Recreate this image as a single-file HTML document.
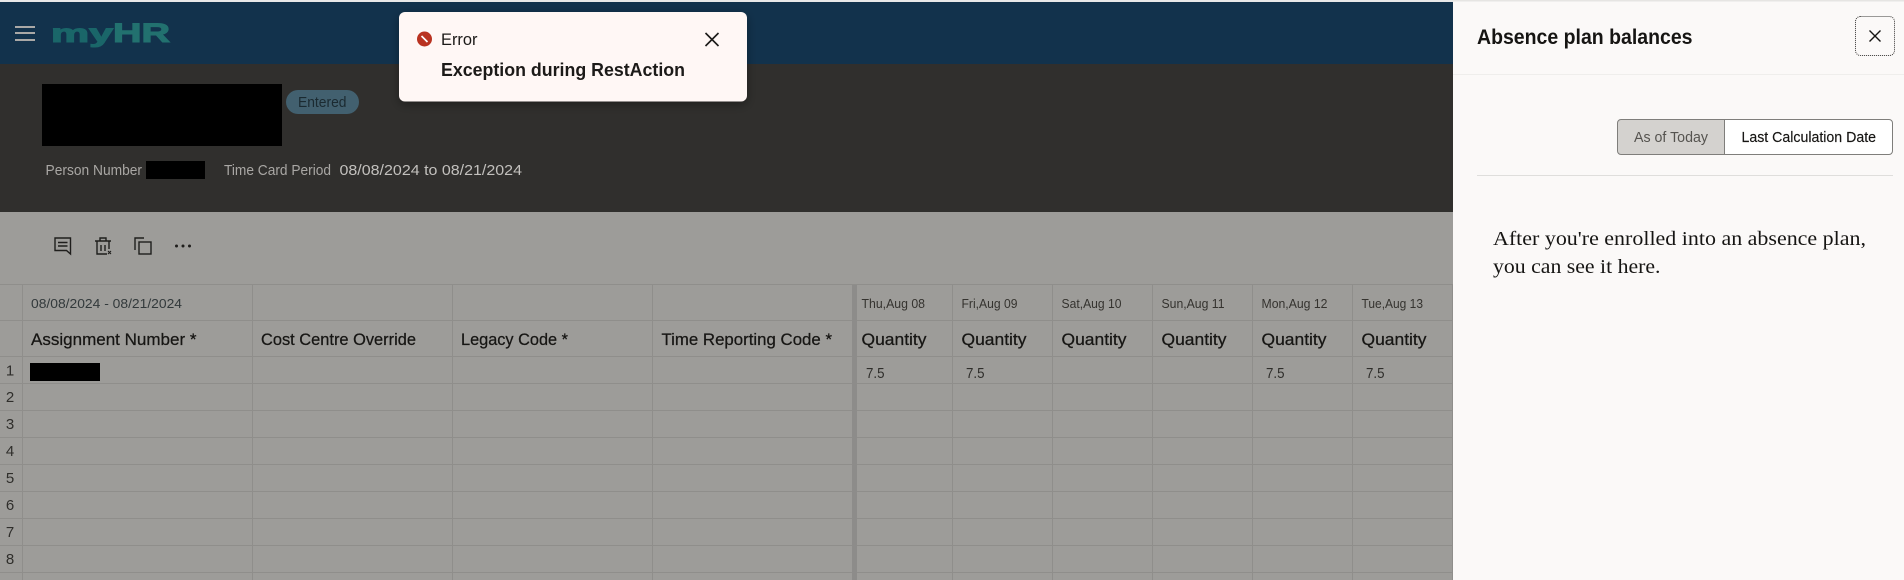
<!DOCTYPE html>
<html lang="en">
<head>
<meta charset="utf-8">
<title>myHR</title>
<style>
html,body{margin:0;padding:0;width:1904px;height:580px;overflow:hidden;background:#9d9c99}
svg{display:block;position:absolute;left:0;top:0}
text{font-family:"Liberation Sans",sans-serif;white-space:pre}
.day{font-size:12.500px;fill:#35332f}
.qty{font-size:17px;fill:#171614;stroke:#171614;stroke-width:.25}
.val{font-size:14.500px;fill:#2f2e2b}
.num{font-size:15px;fill:#2f2e2b;text-anchor:middle}
.hd{font-size:17px;fill:#171614;stroke:#171614;stroke-width:.25}
</style>
</head>
<body>
<svg width="1904" height="580" viewBox="0 0 1904 580" xmlns="http://www.w3.org/2000/svg">
<defs>
<filter id="sh" x="-10%" y="-20%" width="120%" height="150%"><feDropShadow dx="0" dy="3" stdDeviation="5" flood-color="#000" flood-opacity=".35"/></filter>
</defs>

<!-- page bands -->
<rect width="1904" height="2" fill="#e8e8e8"/>
<rect y="2" width="1453" height="62" fill="#12324c"/>
<rect y="64" width="1453" height="148" fill="#302f2d"/>
<rect y="212" width="1453" height="368" fill="#9d9c99"/>

<!-- hamburger -->
<g fill="#a9a8a6">
<rect x="15" y="26" width="20" height="2"/>
<rect x="15" y="32" width="20" height="2"/>
<rect x="15" y="39" width="20" height="2"/>
</g>
<!-- logo -->
<text x="51" y="42" font-size="25" font-weight="700" fill="#1a6669" stroke="#1a6669" stroke-width="1.100" textLength="62" lengthAdjust="spacingAndGlyphs">my</text>
<text x="113" y="42" font-size="27" font-weight="700" fill="#22716f" stroke="#22716f" stroke-width="1.100" textLength="57" lengthAdjust="spacingAndGlyphs">HR</text>

<!-- title strip -->
<rect x="42" y="84" width="240" height="62" fill="#000"/>
<rect x="286" y="90" width="73" height="24" rx="12" fill="#42606f"/>
<text x="298" y="107" font-size="15" fill="#1b2a31" textLength="48.500" lengthAdjust="spacingAndGlyphs">Entered</text>
<text x="45.500" y="175" font-size="15" fill="#a9a7a4" textLength="96.500" lengthAdjust="spacingAndGlyphs">Person Number</text>
<rect x="146" y="161" width="59" height="18" fill="#000"/>
<text x="224" y="175" font-size="15" fill="#a9a7a4" textLength="107" lengthAdjust="spacingAndGlyphs">Time Card Period</text>
<text x="339.500" y="175" font-size="14.500" fill="#c2c0bd" textLength="182.500" lengthAdjust="spacingAndGlyphs">08/08/2024 to 08/21/2024</text>

<!-- toolbar icons -->
<g fill="none" stroke="#1f1e1c" stroke-width="1.400">
<path d="M55 238h15.500v16l-4-3.500H55z"/>
<path d="M58 242.500h9.500M58 246h9.500"/>
<path d="M95 241h16M100 241v-3h6v3M97 241v13h10M109 241v8M101 245v6M105 245v6"/>
<path d="M144 238h-9v12"/>
<rect x="139" y="242" width="12" height="12"/>
</g>
<path d="M108 251l3 3m0-3l-3 3" stroke="#1f1e1c" stroke-width="1.100" fill="none"/>
<g fill="#1f1e1c"><circle cx="176.500" cy="246" r="1.500"/><circle cx="183" cy="246" r="1.500"/><circle cx="189.500" cy="246" r="1.500"/></g>

<!-- grid -->
<g shape-rendering="crispEdges" stroke="#8f8e8b" stroke-width="1" fill="none">
<path d="M0 284.500H1453M0 320.500H1453M0 356.500H1453M0 383.500H1453M0 410.500H1453M0 437.500H1453M0 464.500H1453M0 491.500H1453M0 518.500H1453M0 545.500H1453M0 572.500H1453"/>
<path d="M22.500 284V580M252.500 284V580M452.500 284V580M652.500 284V580M952.500 284V580M1052.500 284V580M1152.500 284V580M1252.500 284V580M1352.500 284V580M1452.500 284V580"/>
</g>
<rect x="852" y="285" width="5" height="295" fill="#8d8c8a"/>

<text x="31" y="308" font-size="12.500" fill="#32393b" textLength="151" lengthAdjust="spacingAndGlyphs">08/08/2024 - 08/21/2024</text>
<text class="hd" x="31" y="345" textLength="165.500" lengthAdjust="spacingAndGlyphs">Assignment Number *</text>
<text class="hd" x="261" y="345" textLength="155" lengthAdjust="spacingAndGlyphs">Cost Centre Override</text>
<text class="hd" x="461" y="345" textLength="107" lengthAdjust="spacingAndGlyphs">Legacy Code *</text>
<text class="hd" x="661.500" y="345" textLength="170.500" lengthAdjust="spacingAndGlyphs">Time Reporting Code *</text>

<text class="day" x="861.500" y="308" textLength="63.500" lengthAdjust="spacingAndGlyphs">Thu,Aug 08</text>
<text class="day" x="961.500" y="308" textLength="56" lengthAdjust="spacingAndGlyphs">Fri,Aug 09</text>
<text class="day" x="1061.500" y="308" textLength="60" lengthAdjust="spacingAndGlyphs">Sat,Aug 10</text>
<text class="day" x="1161.500" y="308" textLength="63" lengthAdjust="spacingAndGlyphs">Sun,Aug 11</text>
<text class="day" x="1261.500" y="308" textLength="66" lengthAdjust="spacingAndGlyphs">Mon,Aug 12</text>
<text class="day" x="1361.500" y="308" textLength="61.500" lengthAdjust="spacingAndGlyphs">Tue,Aug 13</text>

<text class="qty" x="861.500" y="345" textLength="65" lengthAdjust="spacingAndGlyphs">Quantity</text>
<text class="qty" x="961.500" y="345" textLength="65" lengthAdjust="spacingAndGlyphs">Quantity</text>
<text class="qty" x="1061.500" y="345" textLength="65" lengthAdjust="spacingAndGlyphs">Quantity</text>
<text class="qty" x="1161.500" y="345" textLength="65" lengthAdjust="spacingAndGlyphs">Quantity</text>
<text class="qty" x="1261.500" y="345" textLength="65" lengthAdjust="spacingAndGlyphs">Quantity</text>
<text class="qty" x="1361.500" y="345" textLength="65" lengthAdjust="spacingAndGlyphs">Quantity</text>

<text class="val" x="866" y="378" textLength="18.500" lengthAdjust="spacingAndGlyphs">7.5</text>
<text class="val" x="966" y="378" textLength="18.500" lengthAdjust="spacingAndGlyphs">7.5</text>
<text class="val" x="1266" y="378" textLength="18.500" lengthAdjust="spacingAndGlyphs">7.5</text>
<text class="val" x="1366" y="378" textLength="18.500" lengthAdjust="spacingAndGlyphs">7.5</text>

<rect x="30" y="363" width="70" height="18" fill="#000"/>
<text class="num" x="10" y="375.500">1</text>
<text class="num" x="10" y="402">2</text>
<text class="num" x="10" y="429">3</text>
<text class="num" x="10" y="456">4</text>
<text class="num" x="10" y="483">5</text>
<text class="num" x="10" y="510">6</text>
<text class="num" x="10" y="537">7</text>
<text class="num" x="10" y="564">8</text>

<!-- toast -->
<rect x="399" y="12" width="348" height="89.500" rx="6" fill="#fff7f5" filter="url(#sh)"/>
<circle cx="424.500" cy="39" r="7.500" fill="#b93220"/>
<path d="M421.500 36l6 6" stroke="#fff" stroke-width="1.700"/>
<text x="441" y="45" font-size="17" fill="#1c1a18" textLength="36.500" lengthAdjust="spacingAndGlyphs">Error</text>
<text x="441" y="76" font-size="18" font-weight="700" fill="#1c1a18" textLength="244" lengthAdjust="spacingAndGlyphs">Exception during RestAction</text>
<path d="M705.500 33l13 13m0-13l-13 13" stroke="#1c1a18" stroke-width="1.600" fill="none"/>

<!-- side panel -->
<rect x="1453" y="0" width="451" height="580" fill="#fbf9f8"/>
<rect x="1453" y="0" width="451" height="1.500" fill="#e6e5e3"/>
<rect x="1453" y="74" width="451" height="1" fill="#efeeec"/>
<text x="1477" y="44" font-size="21" font-weight="700" fill="#161513" textLength="215.500" lengthAdjust="spacingAndGlyphs">Absence plan balances</text>
<rect x="1855.500" y="16.500" width="39" height="39" rx="5" fill="none" stroke="#3a3937" stroke-width="1" stroke-dasharray="1 1"/>
<path d="M1869.500 30.500l11 11m0-11l-11 11" stroke="#161513" stroke-width="1.400" fill="none"/>

<path d="M1724.500 119.500H1621a3.500 3.500 0 0 0-3.500 3.500v28a3.500 3.500 0 0 0 3.500 3.500h103.500z" fill="#d4d2cf" stroke="#7f7e7b"/>
<path d="M1724.500 119.500H1889a3.500 3.500 0 0 1 3.500 3.500v28a3.500 3.500 0 0 1-3.500 3.500H1724.500z" fill="#fff" stroke="#7f7e7b"/>
<text x="1634" y="142" font-size="15" fill="#55534f" textLength="74" lengthAdjust="spacingAndGlyphs">As of Today</text>
<text x="1741.500" y="142" font-size="15" fill="#161513" stroke="#161513" stroke-width=".15" textLength="134.500" lengthAdjust="spacingAndGlyphs">Last Calculation Date</text>
<rect x="1477" y="175" width="416" height="1" fill="#dfdedc"/>

<text x="1493" y="245" font-size="20" fill="#161513" style="font-family:'Liberation Serif',serif" textLength="373" lengthAdjust="spacingAndGlyphs">After you're enrolled into an absence plan,</text>
<text x="1493" y="273" font-size="20" fill="#161513" style="font-family:'Liberation Serif',serif" textLength="167.500" lengthAdjust="spacingAndGlyphs">you can see it here.</text>
</svg>
</body>
</html>
